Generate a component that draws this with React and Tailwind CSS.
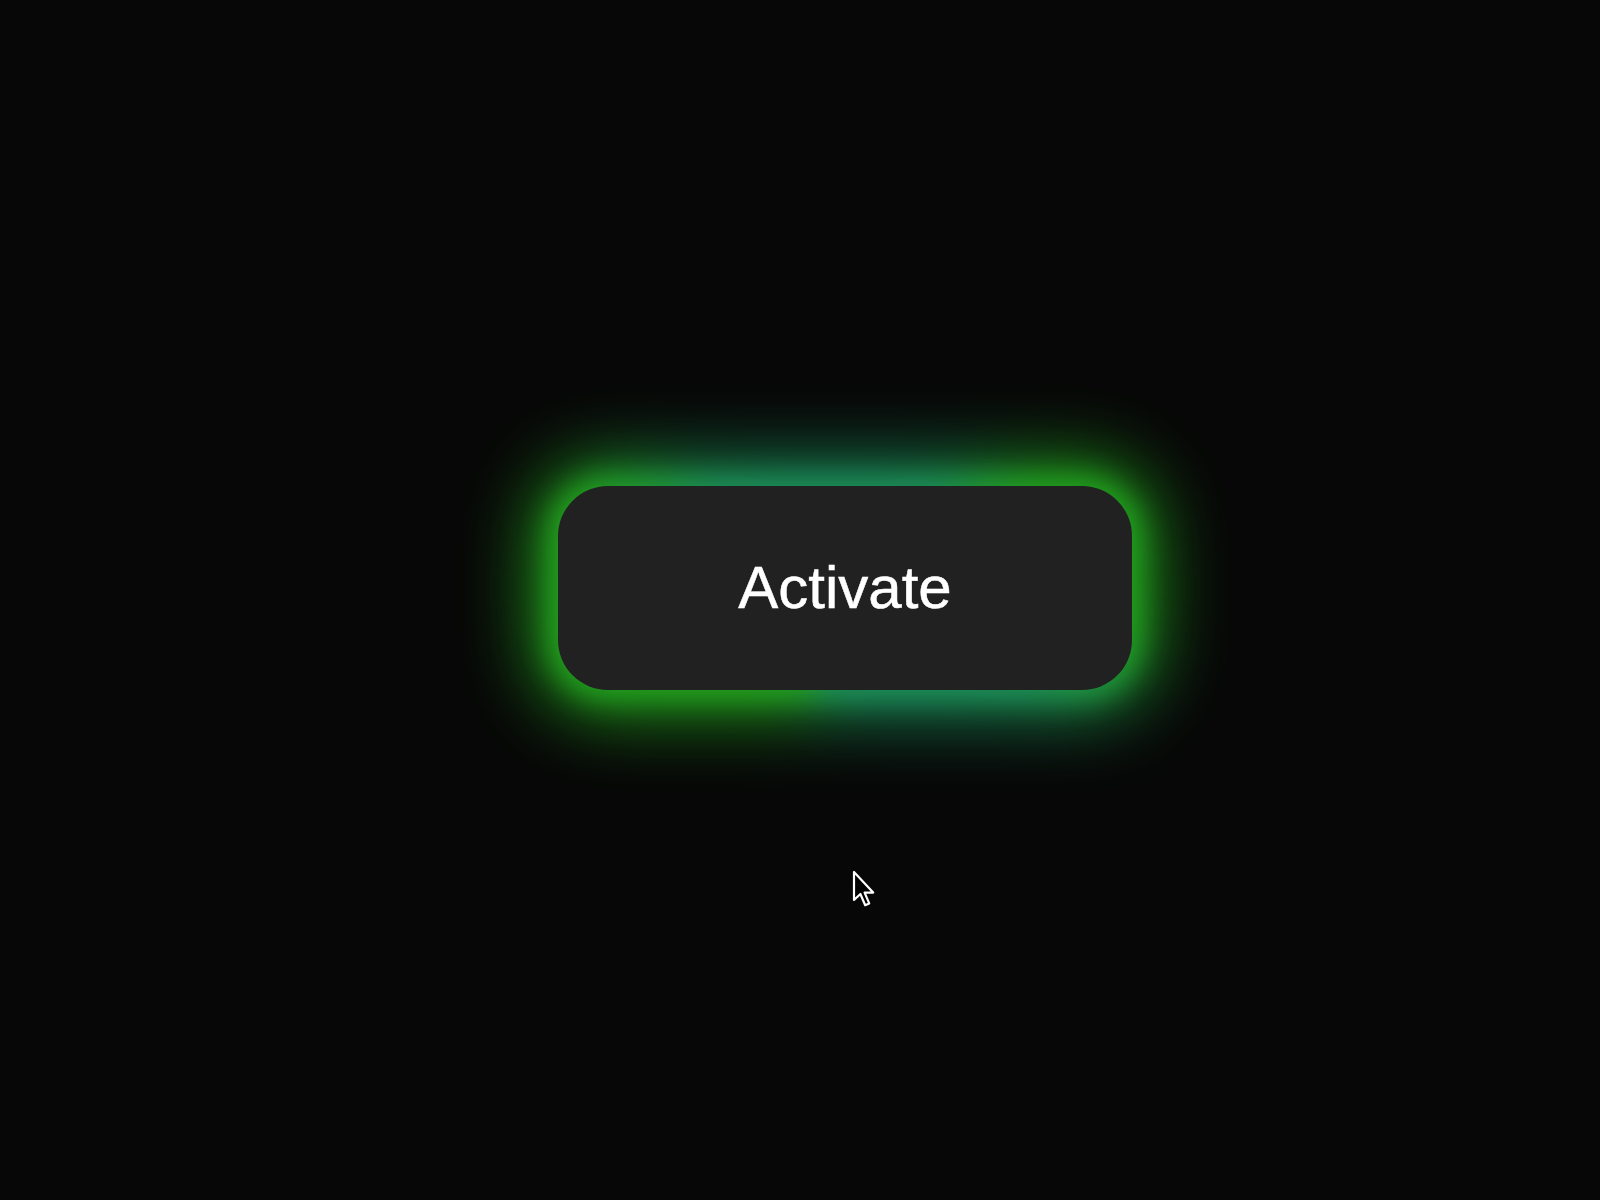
import { useState } from 'react'

function Cursor() {
  return (
    <svg width="26" height="38" viewBox="0 0 12 19" className="absolute left-[851px] top-[870px]">
      <path
        d="M1 1 L1 15 L4.2 12 L6.6 17.6 L8.6 16.7 L6.3 11.3 L10.6 11.3 Z"
        fill="#000"
        stroke="#fff"
        strokeWidth="1.1"
        strokeLinejoin="round"
      />
    </svg>
  )
}

export default function App() {
  const [on, setOn] = useState(false)

  return (
    <div className="relative h-[1200px] w-full overflow-hidden bg-[#070707] flex items-center justify-center pl-[90px] pb-[24px]" style={{ fontFamily: '"Liberation Sans", Arial, sans-serif' }}>
      <div className="relative">
        {/* glow */}
        <div className="absolute -inset-6 rounded-[70px] bg-[conic-gradient(from_0deg,#1c8f5a_0deg,#1c8f5a_45deg,#22a01e_62deg,#22a01e_100deg,#1c8f5a_118deg,#1c8f5a_190deg,#22a01e_205deg,#22a01e_290deg,#1c8f5a_305deg,#1c8f5a_360deg)] blur-[36px] opacity-95" />
        <div className="absolute -inset-[8px] rounded-[58px] bg-[conic-gradient(from_0deg,#1c8f5a_0deg,#1c8f5a_45deg,#22a01e_62deg,#22a01e_100deg,#1c8f5a_118deg,#1c8f5a_190deg,#22a01e_205deg,#22a01e_290deg,#1c8f5a_305deg,#1c8f5a_360deg)] blur-[14px]" />
        <button
          onClick={() => setOn(!on)}
          className="relative w-[574px] h-[204px] rounded-[50px] bg-[#212121] text-white text-[60px] leading-none flex items-center justify-center [-webkit-text-stroke:0.5px_white]"
        >
          Activate
        </button>
      </div>
      <Cursor />
    </div>
  )
}
